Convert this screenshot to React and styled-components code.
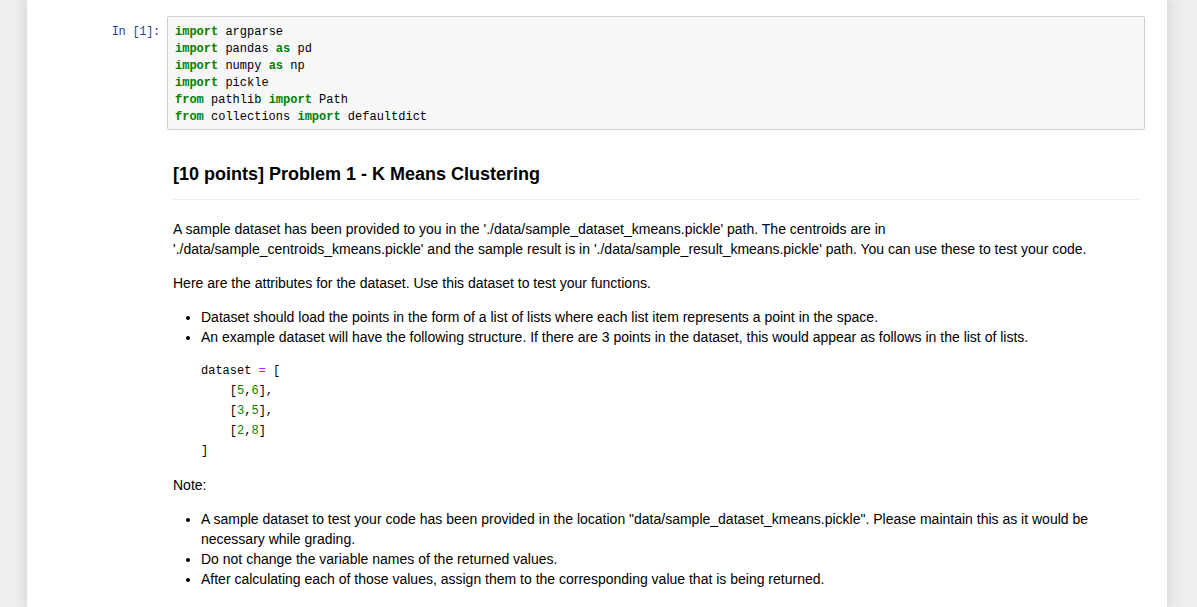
import React from "react";
import styled, { createGlobalStyle } from "styled-components";

const Global = createGlobalStyle`
  html, body { margin: 0; padding: 0; background: #eeeeee; }
  body { font-family: "Liberation Sans", Arial, sans-serif; }
  #root { min-height: 607px; }
`;

const Page = styled.div`
  display: flex;
  min-height: 607px;
  padding-left: 27px;
  overflow: hidden;
`;

const Notebook = styled.div`
  width: 1140px;
  min-height: 607px;
  background: #ffffff;
  box-shadow: 0 0 12px 1px rgba(87, 87, 87, 0.2);
  padding-top: 16px;
  box-sizing: border-box;
`;

const CodeCell = styled.div`
  display: flex;
  align-items: flex-start;
`;

const Prompt = styled.div`
  width: 133px;
  padding-right: 7px;
  padding-top: 8px;
  text-align: right;
  color: #303f9f;
  font-family: "Liberation Mono", "DejaVu Sans Mono", monospace;
  font-size: 12px;
  line-height: 17px;
  letter-spacing: -0.3px;
  white-space: pre;
`;

const InputArea = styled.pre`
  margin: 0;
  width: 978px;
  box-sizing: border-box;
  background: #f7f7f7;
  border: 1px solid #cfcfcf;
  border-radius: 2px;
  padding: 7px 7px 3px;
  font-family: "Liberation Mono", "DejaVu Sans Mono", monospace;
  font-size: 12px;
  line-height: 17px;
  color: #000;
`;

const Kw = styled.span`
  color: #008000;
  font-weight: bold;
`;

const MarkdownCell = styled.div`
  padding-left: 146px;
  padding-right: 28px;
  color: #000;
  font-size: 14px;
  line-height: 20px;
`;

const Heading = styled.h3`
  margin: 33px 0 0;
  font-size: 18px;
  line-height: 22px;
  font-weight: bold;
`;

const Rule = styled.hr`
  border: none;
  border-top: 1px solid #eeeeee;
  margin: 14px 0 0;
  height: 0;
`;

const Para = styled.p`
  margin: ${(p) => p.$top ?? 14}px 0 0;
`;

const List = styled.ul`
  margin: 14px 0 0;
  padding-left: 28px;
  list-style: disc;
`;

const Pre = styled.pre`
  margin: 14px 0 0 28px;
  font-family: "Liberation Mono", "DejaVu Sans Mono", monospace;
  font-size: 12px;
  line-height: 20px;
  color: #000;
`;

const Op = styled.span`
  color: #aa22ff;
`;

const Num = styled.span`
  color: #008000;
`;

export default function App() {
  return (
    <>
      <Global />
      <Page>
        <Notebook>
          <CodeCell>
            <Prompt>In [1]:</Prompt>
            <InputArea>
              <Kw>import</Kw> argparse{"\n"}
              <Kw>import</Kw> pandas <Kw>as</Kw> pd{"\n"}
              <Kw>import</Kw> numpy <Kw>as</Kw> np{"\n"}
              <Kw>import</Kw> pickle{"\n"}
              <Kw>from</Kw> pathlib <Kw>import</Kw> Path{"\n"}
              <Kw>from</Kw> collections <Kw>import</Kw> defaultdict
            </InputArea>
          </CodeCell>
          <MarkdownCell>
            <Heading>[10 points] Problem 1 - K Means Clustering</Heading>
            <Rule />
            <Para $top={19}>
              A sample dataset has been provided to you in the './data/sample_dataset_kmeans.pickle' path. The centroids are in
              './data/sample_centroids_kmeans.pickle' and the sample result is in './data/sample_result_kmeans.pickle' path. You can use these to test your code.
            </Para>
            <Para>Here are the attributes for the dataset. Use this dataset to test your functions.</Para>
            <List>
              <li>Dataset should load the points in the form of a list of lists where each list item represents a point in the space.</li>
              <li>An example dataset will have the following structure. If there are 3 points in the dataset, this would appear as follows in the list of lists.</li>
            </List>
            <Pre>
              dataset <Op>=</Op> [{"\n"}
              {"    "}[<Num>5</Num>,<Num>6</Num>],{"\n"}
              {"    "}[<Num>3</Num>,<Num>5</Num>],{"\n"}
              {"    "}[<Num>2</Num>,<Num>8</Num>]{"\n"}
              ]
            </Pre>
            <Para $top={14}>Note:</Para>
            <List>
              <li>
                A sample dataset to test your code has been provided in the location "data/sample_dataset_kmeans.pickle". Please maintain this as it would be necessary while grading.
              </li>
              <li>Do not change the variable names of the returned values.</li>
              <li>After calculating each of those values, assign them to the corresponding value that is being returned.</li>
            </List>
          </MarkdownCell>
        </Notebook>
      </Page>
    </>
  );
}
